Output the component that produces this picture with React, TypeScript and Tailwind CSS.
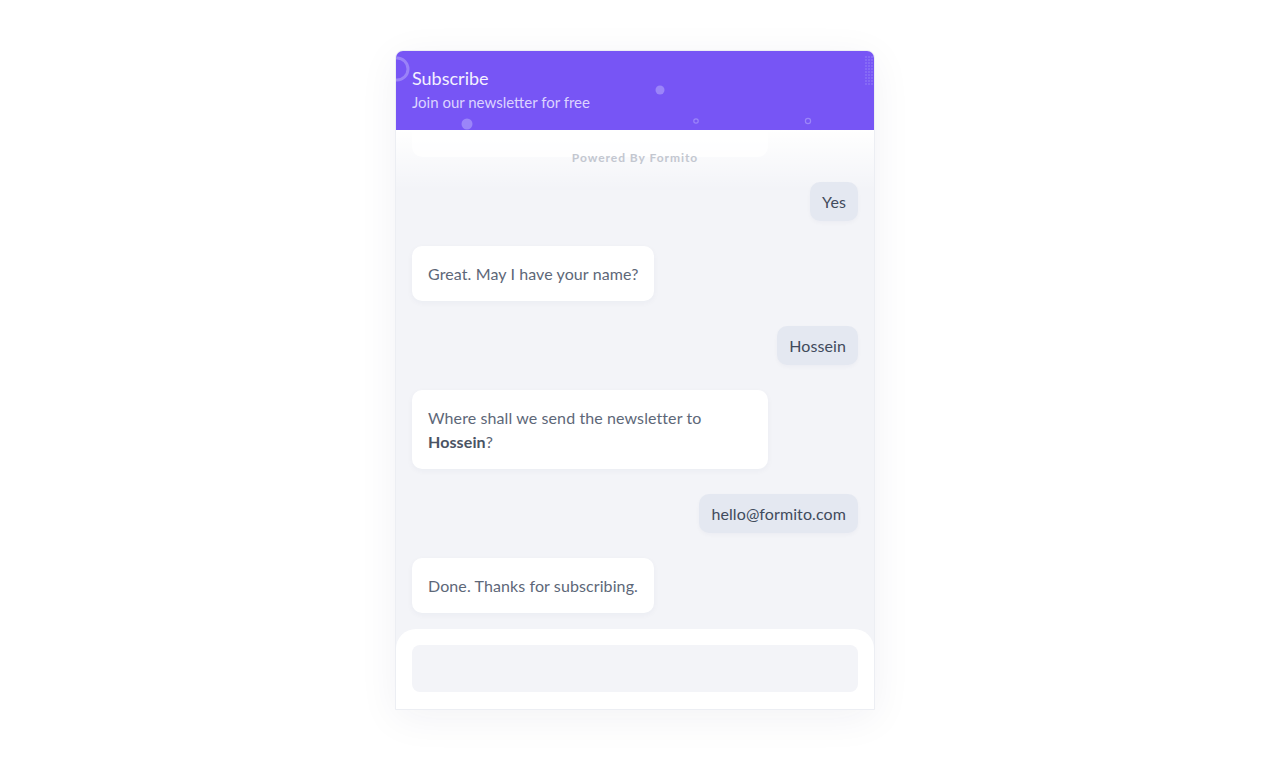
const font = { fontFamily: 'Lato, "Noto Sans", sans-serif' }

function Header() {
  return (
    <div className="relative h-[79px] overflow-hidden rounded-t-[7px] bg-[#7755f5] px-4 pt-[16px]">
      <svg className="absolute left-0 top-0" width="478" height="79" viewBox="0 0 478 79">
        <circle cx="1" cy="18" r="11" fill="none" stroke="#9a82f8" strokeWidth="3" />
        <circle cx="264" cy="39" r="4.5" fill="#9b85f9" />
        <circle cx="71" cy="73" r="5.5" fill="#9b85f9" />
        <circle cx="300" cy="70" r="2.2" fill="none" stroke="#9b85f9" strokeWidth="1.2" />
        <circle cx="412" cy="70" r="2.6" fill="none" stroke="#9b85f9" strokeWidth="1.2" />
        {[0, 1, 2].map((c) =>
          [0, 1, 2, 3, 4, 5, 6, 7, 8, 9].map((r) => (
            <circle key={`${c}-${r}`} cx={470 + c * 3} cy={6 + r * 3} r="0.8" fill="#9a84f8" />
          )),
        )}
      </svg>
      <div className="relative text-[18px] leading-[22px] text-[#f4f1ff]">Subscribe</div>
      <div className="relative mt-[3px] text-[15px] leading-5 text-[#dcd3ff]">Join our newsletter for free</div>
    </div>
  )
}

function Bot({ children }: { children: React.ReactNode }) {
  return (
    <div className="flex">
      <div className="max-w-[356px] rounded-[10px] bg-white px-4 pb-[15px] pt-4 text-[16px] leading-6 tracking-[0.1px] text-[#5d6778] shadow-[0_2px_6px_rgba(30,40,90,0.04)]">
        {children}
      </div>
    </div>
  )
}

function User({ children }: { children: React.ReactNode }) {
  return (
    <div className="flex justify-end">
      <div className="rounded-[10px] bg-[#e4e8f1] px-3 pb-2 pt-[9px] text-[16px] leading-[22px] tracking-[0.1px] text-[#414b5c] shadow-[0_2px_4px_rgba(30,40,90,0.03)]">
        {children}
      </div>
    </div>
  )
}

export default function App() {
  return (
    <div className="min-h-[760px] bg-white pt-[50px]" style={font}>
      <div className="mx-auto w-[480px] rounded-t-[8px] border border-[#eceef3] bg-[#f3f4f8] shadow-[0_8px_40px_rgba(40,40,80,0.06)]">
        <Header />
        <div className="relative">
          <div className="absolute inset-x-0 top-0 h-[60px] bg-gradient-to-b from-white to-[#f3f4f8]/0" />
          <div className="relative px-4">
            <div className="h-[27px] w-[356px] rounded-b-[10px] bg-white/70" />
            <div className="-mt-[8px] text-center text-[12px] font-bold tracking-[0.08em] text-[#c3c7d0]">Powered By Formito</div>
            <div className="mt-[15px] flex flex-col gap-[25px] pb-4">
              <User>Yes</User>
              <Bot>Great. May I have your name?</Bot>
              <User>Hossein</User>
              <Bot>
                Where shall we send the newsletter to <b className="font-bold text-[#4a5363]">Hossein</b>?
              </Bot>
              <User>hello@formito.com</User>
              <Bot>Done. Thanks for subscribing.</Bot>
            </div>
          </div>
        </div>
        <div className="rounded-t-[20px] bg-white px-4 pb-[17px] pt-4">
          <div className="h-[47px] rounded-[8px] bg-[#f3f4f8]" />
        </div>
      </div>
    </div>
  )
}
